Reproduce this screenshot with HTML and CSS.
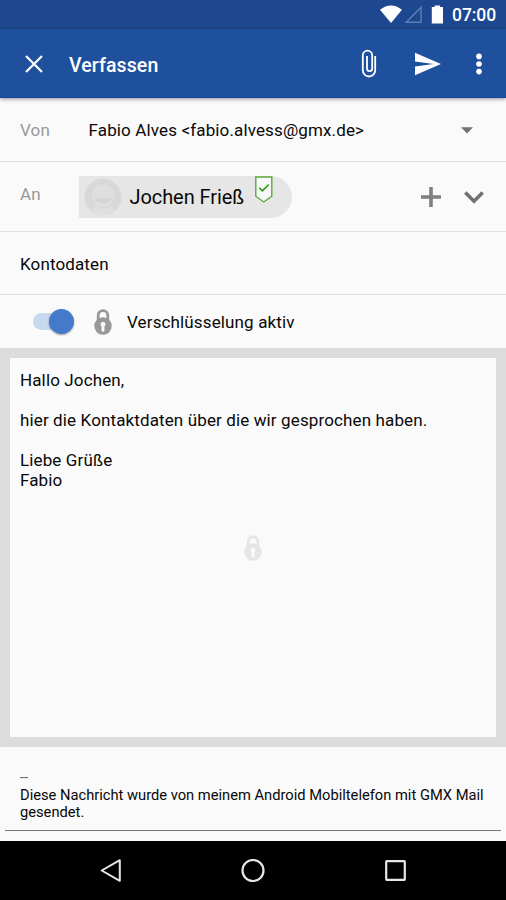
FILE: index.html
```html
<!DOCTYPE html>
<html lang="de">
<head>
<meta charset="utf-8">
<title>Verfassen</title>
<link rel="stylesheet" href="styles.css">
</head>
<body>
<div class="screen">
  <div class="status">
    <svg class="status-icons" width="66" height="20" viewBox="0 0 66 20">
      <path d="M0 5.800Q11 -2.800 22 5.800L11 19Z" fill="#fff"/>
      <path d="M41.100 3.300V18.200H26.200Z" fill="none" stroke="#5d7fb3" stroke-width="1.400"/>
      <path d="M51.800 3h2.900V1.400h5.400V3h2.900v16.500h-11.200z" fill="#fff"/>
    </svg>
    <span class="clock">07:00</span>
  </div>
  <header class="toolbar">
    <svg class="close" width="18" height="18" viewBox="0 0 18 18"><path d="M1 1L17 17M17 1L1 17" stroke="#fff" stroke-width="2.200"/></svg>
    <h1 class="title">Verfassen</h1>
    <svg class="clip" width="16" height="30" viewBox="0 0 16 30"><path d="M14.200 7V21.300a6.200 6.200 0 0 1-12.400 0V6.400a4.700 4.700 0 0 1 9.400 0V19.500a2.600 2.600 0 0 1-5.200 0V7" fill="none" stroke="#fff" stroke-width="1.800"/></svg>
    <svg class="send" width="26" height="24" viewBox="0 0 26 24"><path d="M0 .7L26 12L0 23.300V14.500L18.500 12L0 9.500Z" fill="#fff"/></svg>
    <svg class="more" width="6" height="22" viewBox="0 0 6 22" fill="#fff"><circle cx="3" cy="3.400" r="2.800"/><circle cx="3" cy="11" r="2.800"/><circle cx="3" cy="18.600" r="2.800"/></svg>
  </header>
  <main class="form">
    <div class="row from">
      <span class="label">Von</span>
      <span class="sender">Fabio Alves &lt;fabio.alvess@gmx.de&gt;</span>
      <svg class="drop" width="12" height="7" viewBox="0 0 12 7"><path d="M0 .2H12L6 6.500Z" fill="#717171"/></svg>
    </div>
    <div class="row to">
      <span class="label">An</span>
      <div class="chip">
        <svg class="avatar" width="38" height="38" viewBox="0 0 38 38">
          <defs><clipPath id="disc"><circle cx="19" cy="19" r="18.500"/></clipPath></defs>
          <circle cx="19" cy="19" r="18.500" fill="#d8d8d8"/>
          <g clip-path="url(#disc)"><path d="M4 38Q7 29 14 28H24Q31 29 34 38Z" fill="#dfdfdf"/><circle cx="19" cy="17.500" r="12.800" fill="#d8d8d8"/></g>
          <circle cx="19" cy="17.500" r="11.200" fill="#dfdfdf"/>
          <path d="M10.500 20.500H27.500Q25.500 25.200 19 25.200T10.500 20.500Z" fill="#d5d5d5"/>
        </svg>
        <span class="name">Jochen Frieß</span>
        <svg class="badge" width="18" height="28" viewBox="0 0 18 28"><path d="M.8 1H16.800V20.200L8.800 26L.8 20.200Z" fill="#f8f8f8" stroke="#58a83a" stroke-width="1.400"/><path d="M4.300 11.800L7.400 14.800L13.800 8.500" fill="none" stroke="#279b13" stroke-width="1.600"/></svg>
      </div>
      <svg class="plus" width="20" height="20" viewBox="0 0 20 20"><path d="M10 0V20M0 10H20" stroke="#808080" stroke-width="3.600"/></svg>
      <svg class="chevron" width="20" height="13" viewBox="0 0 20 13"><path d="M1.300 1.500L10 10.200L18.700 1.500" fill="none" stroke="#717171" stroke-width="3.500"/></svg>
    </div>
    <div class="row subject">Kontodaten</div>
    <div class="row crypt">
      <span class="switch"><span class="knob"></span></span>
      <svg class="lock" width="18" height="26" viewBox="0 0 18 26"><path d="M4.200 12V6.500a4.800 4.800 0 0 1 9.600 0V12" fill="none" stroke="#989898" stroke-width="2.800"/><circle cx="9" cy="17" r="8.700" fill="#989898"/><path d="M9 12.700a2.500 2.500 0 0 1 1.500 4.500V21.300a1.500 1.500 0 0 1-3 0V17.200A2.500 2.500 0 0 1 9 12.700Z" fill="#fafafa"/></svg>
      <span class="crypt-text">Verschlüsselung aktiv</span>
    </div>
    <section class="editor">
      <div class="message">
        <p>Hallo Jochen,</p>
        <p>hier die Kontaktdaten über die wir gesprochen haben.</p>
        <p>Liebe Grüße<br>Fabio</p>
        <svg class="watermark" width="18" height="26" viewBox="0 0 18 26"><path d="M4.200 12V6.500a4.800 4.800 0 0 1 9.600 0V12" fill="none" stroke="#e6e6e6" stroke-width="2.800"/><circle cx="9" cy="17" r="8.700" fill="#e6e6e6"/><path d="M9 12.700a2.500 2.500 0 0 1 1.500 4.500V21.300a1.500 1.500 0 0 1-3 0V17.200A2.500 2.500 0 0 1 9 12.700Z" fill="#fafafa"/></svg>
      </div>
    </section>
    <section class="signature"><span class="dashes">--</span><br>Diese Nachricht wurde von meinem Android Mobiltelefon mit GMX Mail<br>gesendet.</section>
  </main>
  <nav class="nav">
    <svg width="24" height="24" viewBox="0 0 24 24"><path d="M20.800 1.200V21.800L2.700 11.500Z" fill="none" stroke="#e6e6e6" stroke-width="2" stroke-linejoin="round"/></svg>
    <svg width="24" height="24" viewBox="0 0 24 24"><circle cx="12" cy="11.500" r="10.500" fill="none" stroke="#e6e6e6" stroke-width="2.200"/></svg>
    <svg width="24" height="24" viewBox="0 0 24 24"><rect x="3.200" y="2.200" width="18.600" height="18.600" rx=".5" fill="none" stroke="#e6e6e6" stroke-width="2.200"/></svg>
  </nav>
</div>
</body>
</html>
```

FILE: styles.css
```css
* { box-sizing: border-box; }
body { margin: 0; background: #fafafa; color: #080808; font-family: Roboto, "Liberation Sans", sans-serif; font-size: 17px; letter-spacing: .125px; }
svg { display: block; flex: none; }
.screen { width: 506px; height: 900px; display: flex; flex-direction: column; overflow: hidden; }
.status { height: 29px; flex: none; background: #1d4890; display: flex; align-items: flex-start; padding: 4px 10px 0 380px; color: #fff; }
.clock { margin-left: 6px; font-size: 17.5px; font-weight: 500; line-height: 22px; letter-spacing: -.05px; }
.toolbar { height: 69px; flex: none; background: #1e509e; border-bottom: 1px solid #13469b; box-shadow: 0 1px 4px rgba(0,0,0,.42); display: flex; align-items: center; padding: 2px 24px 0 25px; color: #fff; position: relative; }
.title { margin: 3px 0 0 26px; font-size: 19.5px; font-weight: 500; letter-spacing: .1px; flex: 1; }
.send { margin-left: 38px; }
.more { margin-left: 35px; }
.form { flex: 1; display: flex; flex-direction: column; }
.row { flex: none; display: flex; align-items: center; border-bottom: 1px solid #e1e1e1; padding-left: 20px; white-space: nowrap; }
.from { height: 64px; }
.to { height: 70px; }
.subject { height: 63px; padding-top: 2px; }
.crypt { height: 53px; border-bottom: 0; padding-left: 33px; }
.label { color: #999; width: 68.5px; flex: none; }
.sender { flex: 1; padding-top: 1px; letter-spacing: .135px; }
.drop { margin: 1px 33px 0 0; }
.to .label { width: 58.5px; padding-bottom: 6px; }
.chip { width: 213.5px; height: 42px; background: #e6e6e6; border-radius: 0 21px 21px 0; display: flex; align-items: center; padding-left: 5px; }
.name { margin-left: 8px; width: 125.5px; font-size: 20px; padding-top: 1px; letter-spacing: -.08px; }
.badge { align-self: flex-start; }
.plus { margin-left: 129px; }
.chevron { margin-left: 23px; margin-top: 2px; }
.switch { width: 41px; height: 17px; border-radius: 9px; background: #c7d8ef; display: flex; justify-content: flex-end; align-items: center; }
.knob { width: 25px; height: 25px; border-radius: 50%; background: #447aca; box-shadow: 0 1px 2px rgba(0,0,0,.4); flex: none; }
.lock { margin-left: 19.5px; }
.crypt-text { margin-left: 15.5px; letter-spacing: .135px; }
.editor { height: 399px; flex: none; background: #dcdcdc; padding: 10px; }
.message { height: 379px; background: #fafafa; padding: 12px 10px; line-height: 20px; display: flex; flex-direction: column; }
.message p { margin: 0 0 20px; }
.message .watermark { margin: 25px auto 0; }
.signature { height: 84px; margin: 0 5px; border-bottom: 1px solid #777; padding: 22px 15px 0; font-size: 14.7px; letter-spacing: 0; line-height: 17.5px; white-space: nowrap; }
.dashes { color: #666; }
.nav { height: 59px; flex: none; background: #000; display: flex; gap: 118px; padding: 18px 0 0 99px; }
```
